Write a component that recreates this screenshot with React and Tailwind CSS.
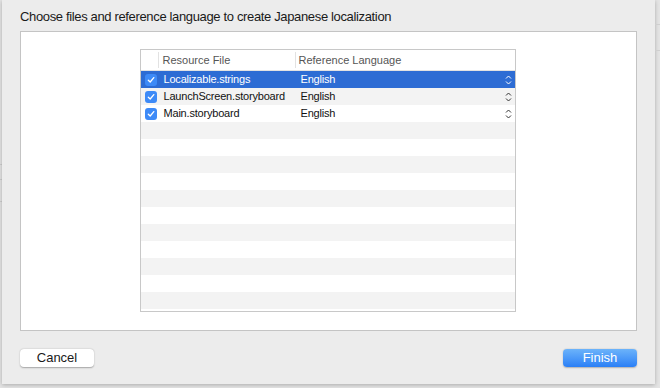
import React from 'react';

const files = ['Localizable.strings', 'LaunchScreen.storyboard', 'Main.storyboard'];

function Check() {
  return (
    <span className="w-[12px] h-[12px] rounded-[3px] bg-[#3d8af7] flex items-center justify-center">
      <svg width="8" height="8" viewBox="0 0 8 8">
        <path d="M1.3 4.2 L3.2 6 L6.8 1.6" fill="none" stroke="#fff" strokeWidth="1.3" strokeLinecap="round" strokeLinejoin="round" />
      </svg>
    </span>
  );
}

function Stepper({ white }) {
  return (
    <svg width="7" height="10" viewBox="0 0 7 10">
      <path d="M1 3.5 L3.5 1 L6 3.5 M1 6.5 L3.5 9 L6 6.5" fill="none" stroke={white ? '#fff' : '#333'} strokeWidth="1" />
    </svg>
  );
}

export default function App() {
  const empty = Array.from({ length: 11 });
  return (
    <div className="w-[660px] h-[388px] bg-[#e4e4e4] flex overflow-hidden" style={{ fontFamily: '"Liberation Sans", Arial, sans-serif' }}>
      <div className="w-[2px] flex flex-col">
        <div className="h-[165px] border-b border-[#cfcfcf]" />
        <div className="h-[15px] border-b border-[#cfcfcf]" />
        <div className="h-[22px] border-b border-[#cfcfcf]" />
      </div>
      <div className="w-[653px] h-[384px] bg-[#ececec] shadow-[0_1px_4px_rgba(0,0,0,0.25)] flex flex-col px-[18px]">
        <div className="h-[31px] pt-[9px] text-[13px] tracking-[-0.35px] text-[#1a1a1a] leading-[16px]">
          Choose files and reference language to create Japanese localization
        </div>
        <div className="h-[300px] bg-white border border-[#c4c4c4] flex justify-center pt-[17px]">
          <div className="w-[376px] h-[263px] border border-[#c8c8c8] flex flex-col overflow-hidden ml-[-2px]">
            <div className="h-[21px] flex text-[11px] text-[#555] border-b border-[#e2e2e2] shrink-0">
              <div className="w-[18px] border-r border-[#e2e2e2] my-[2px]" />
              <div className="w-[137px] pl-[4px] border-r border-[#e2e2e2] my-[2px] flex items-center">Resource File</div>
              <div className="flex-1 pl-[3px] flex items-center">Reference Language</div>
            </div>
            {files.map((f, i) => {
              const sel = i === 0;
              const bg = sel ? 'bg-[#2d6cd4] text-white' : i % 2 === 1 ? 'bg-[#f3f3f3] text-[#111]' : 'bg-white text-[#111]';
              return (
                <div key={f} className={`h-[17px] flex items-center text-[11px] tracking-[-0.2px] shrink-0 ${bg}`}>
                  <div className="w-[18px] pl-[4px] flex items-center"><Check /></div>
                  <div className="w-[137px] pl-[5px]">{f}</div>
                  <div className="flex-1 pl-[5px]">English</div>
                  <div className="pr-[3px] flex items-center"><Stepper white={sel} /></div>
                </div>
              );
            })}
            {empty.map((_, i) => (
              <div key={i} className={`h-[17px] shrink-0 ${i % 2 === 0 ? 'bg-[#f3f3f3]' : 'bg-white'}`} />
            ))}
          </div>
        </div>
        <div className="flex justify-between pt-[18px]">
          <button className="w-[74px] h-[18px] bg-white rounded-[4px] shadow-[0_0.5px_1.5px_rgba(0,0,0,0.3)] text-[13px] text-[#1a1a1a] leading-[18px]">Cancel</button>
          <button className="w-[74px] h-[18px] rounded-[4px] bg-gradient-to-b from-[#6cb3fa] to-[#2a7ff6] shadow-[0_0.5px_1.5px_rgba(0,0,0,0.25)] text-[13px] text-white leading-[18px]">Finish</button>
        </div>
      </div>
      <div className="flex-1 flex flex-col">
        <div className="h-[25px] border-b border-[#cfcfcf]" />
        <div className="h-[26px] border-b border-[#cfcfcf]" />
      </div>
    </div>
  );
}
